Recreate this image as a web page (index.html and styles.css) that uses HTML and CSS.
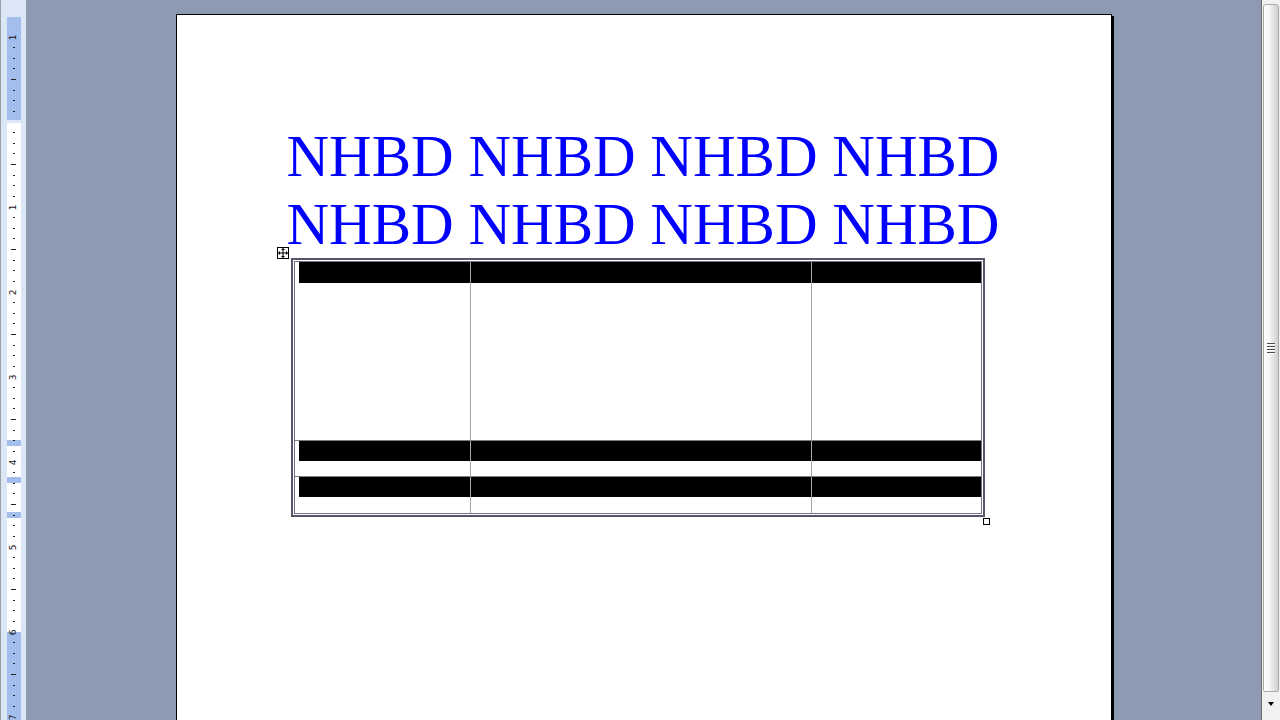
FILE: index.html
```html
<!DOCTYPE html>
<html>
<head>
<meta charset="utf-8">
<title>Document</title>
<link rel="stylesheet" href="styles.css">
</head>
<body>
<div class="app">
  <div class="ruler">
    <div class="strip">
      <div class="bands">
        <div class="band gap-top"></div>
        <div class="band blue top-margin"></div>
        <div class="band gap-mid"></div>
        <div class="band white w1"></div>
        <div class="band blue row-mark"></div>
        <div class="band white w2"></div>
        <div class="band blue row-mark"></div>
        <div class="band white w3"></div>
        <div class="band blue row-mark"></div>
        <div class="band white w4"></div>
        <div class="band blue bottom-margin"></div>
      </div>
      <div class="ticks">
        <span class="slot"><b class="num">1</b></span>
        <span class="slot"><i class="t"></i></span><span class="slot"><i class="t"></i></span><span class="slot"><i class="t"></i></span>
        <span class="slot"><i class="t long"></i></span>
        <span class="slot"><i class="t"></i></span><span class="slot"><i class="t"></i></span><span class="slot"><i class="t"></i></span>
        <span class="slot"></span>
        <span class="slot"><i class="t"></i></span><span class="slot"><i class="t"></i></span><span class="slot"><i class="t"></i></span>
        <span class="slot"><i class="t long"></i></span>
        <span class="slot"><i class="t"></i></span><span class="slot"><i class="t"></i></span><span class="slot"><i class="t"></i></span>
        <span class="slot"><b class="num">1</b></span>
        <span class="slot"><i class="t"></i></span><span class="slot"><i class="t"></i></span><span class="slot"><i class="t"></i></span>
        <span class="slot"><i class="t long"></i></span>
        <span class="slot"><i class="t"></i></span><span class="slot"><i class="t"></i></span><span class="slot"><i class="t"></i></span>
        <span class="slot"><b class="num">2</b></span>
        <span class="slot"><i class="t"></i></span><span class="slot"><i class="t"></i></span><span class="slot"><i class="t"></i></span>
        <span class="slot"><i class="t long"></i></span>
        <span class="slot"><i class="t"></i></span><span class="slot"><i class="t"></i></span><span class="slot"><i class="t"></i></span>
        <span class="slot"><b class="num">3</b></span>
        <span class="slot"><i class="t"></i></span><span class="slot"><i class="t"></i></span><span class="slot"><i class="t"></i></span>
        <span class="slot"><i class="t long"></i></span>
        <span class="slot"><i class="t"></i></span><span class="slot"><i class="t"></i></span><span class="slot"><i class="t"></i></span>
        <span class="slot"><b class="num">4</b></span>
        <span class="slot"><i class="t"></i></span><span class="slot"><i class="t"></i></span><span class="slot"><i class="t"></i></span>
        <span class="slot"><i class="t long"></i></span>
        <span class="slot"><i class="t"></i></span><span class="slot"><i class="t"></i></span><span class="slot"><i class="t"></i></span>
        <span class="slot"><b class="num">5</b></span>
        <span class="slot"><i class="t"></i></span><span class="slot"><i class="t"></i></span><span class="slot"><i class="t"></i></span>
        <span class="slot"><i class="t long"></i></span>
        <span class="slot"><i class="t"></i></span><span class="slot"><i class="t"></i></span><span class="slot"><i class="t"></i></span>
        <span class="slot"><b class="num">6</b></span>
        <span class="slot"><i class="t"></i></span><span class="slot"><i class="t"></i></span><span class="slot"><i class="t"></i></span>
        <span class="slot"><i class="t long"></i></span>
        <span class="slot"><i class="t"></i></span><span class="slot"><i class="t"></i></span><span class="slot"><i class="t"></i></span>
        <span class="slot"><b class="num">7</b></span>
      </div>
    </div>
  </div>

  <div class="workspace">
    <div class="page">
      <div class="title">NHBD NHBD NHBD NHBD<br>NHBD NHBD NHBD NHBD</div>
      <div class="table">
        <div class="move-handle">
          <svg width="10" height="10" viewBox="0 0 10 10">
            <path d="M5 0.5 L5 9.5 M0.5 5 L9.5 5" stroke="#000" stroke-width="1" fill="none"/>
            <path d="M5 0 L3 2 L7 2 Z M5 10 L3 8 L7 8 Z M0 5 L2 3 L2 7 Z M10 5 L8 3 L8 7 Z" fill="#000"/>
          </svg>
        </div>
        <div class="inner">
          <div class="row row-a">
            <div class="cell c1"><div class="bar full"></div></div>
            <div class="cell c2"><div class="bar full"></div></div>
            <div class="cell c3"><div class="bar full"></div></div>
          </div>
          <div class="row row-b">
            <div class="cell c1"></div>
            <div class="cell c2"></div>
            <div class="cell c3"></div>
          </div>
          <div class="row row-c">
            <div class="cell c1"><div class="bar"></div></div>
            <div class="cell c2"><div class="bar"></div></div>
            <div class="cell c3"><div class="bar"></div></div>
          </div>
          <div class="row row-d">
            <div class="cell c1"><div class="bar"></div></div>
            <div class="cell c2"><div class="bar"></div></div>
            <div class="cell c3"><div class="bar"></div></div>
          </div>
        </div>
        <div class="resize-handle"></div>
      </div>
    </div>
  </div>

  <div class="scrollbar">
    <div class="thumb">
      <div class="grip"><i></i><i></i><i></i><i></i></div>
    </div>
    <div class="down-btn"><span class="arrow"></span></div>
  </div>
</div>
</body>
</html>
```
FILE: styles.css
```css
html, body {
  margin: 0;
  padding: 0;
  width: 1280px;
  height: 720px;
  overflow: hidden;
  background: #8e9ab2;
  font-family: "Liberation Sans", Arial, sans-serif;
}

.app {
  display: flex;
  width: 1280px;
  height: 720px;
}

/* ---------- vertical ruler ---------- */
.ruler {
  flex: none;
  width: 26px;
  height: 720px;
  box-sizing: border-box;
  border-left: 1px solid #9c9ea6;
  padding-left: 6px;
  background: #dbe6f7;
}

.strip {
  width: 14px;
  height: 720px;
  display: grid;
}

.bands, .ticks {
  grid-area: 1 / 1;
  display: flex;
  flex-direction: column;
}

.band { flex: none; }
.blue { background: #a3bdec; }
.white { background: #ffffff; }
.gap-top { height: 17px; }
.top-margin { height: 103px; }
.gap-mid { height: 3px; }
.w1 { height: 317px; }
.row-mark { height: 6px; }
.w2 { height: 31px; }
.w3 { height: 29px; }
.w4 { height: 114px; }
.bottom-margin { height: 100px; }

.ticks {
  padding-top: 31.69px;
}

.slot {
  flex: none;
  height: 10.625px;
  display: flex;
  align-items: center;
  justify-content: center;
}

.t {
  display: block;
  width: 2px;
  height: 1px;
  background: #222;
  margin-left: -1px;
}
.t.long {
  width: 5px;
  margin-left: -2px;
}

.num {
  display: block;
  font-family: "DejaVu Sans", sans-serif;
  font-weight: normal;
  font-size: 9px;
  line-height: 9px;
  color: #111;
  transform: rotate(-90deg);
  margin-left: -1px;
}

/* ---------- workspace + page ---------- */
.workspace {
  flex: 1;
  height: 720px;
  box-sizing: border-box;
  padding-left: 150px;
  padding-top: 14px;
  overflow: hidden;
  background: #8e9ab2;
}

.page {
  width: 936px;
  height: 900px;
  box-sizing: border-box;
  border: 1px solid #000;
  box-shadow: 2px 2px 0 #000;
  background: #fff;
  padding-top: 107px;
}

.title {
  font-family: "Liberation Serif", "Times New Roman", serif;
  font-size: 59px;
  line-height: 68px;
  color: #0000ff;
  text-align: center;
  white-space: nowrap;
  padding-right: 2px;
}

/* ---------- table ---------- */
.table {
  position: relative;
  margin-left: 114px;
  width: 694px;
  box-sizing: border-box;
  border: 2px solid #56566a;
  padding: 1px;
  background: #fff;
}

.inner {
  border: 1px solid #73738a;
  display: flex;
  flex-direction: column;
}

.row {
  display: flex;
  flex: none;
}

.row-a { height: 21px; }
.row-b { height: 157px; }
.row-c { height: 35px; border-top: 1px solid #7d7d7d; }
.row-d { height: 36px; border-top: 1px solid #7d7d7d; }

.cell {
  flex: none;
  display: flex;
  flex-direction: column;
}
.c1 { width: 175px; padding-left: 4px; box-sizing: border-box; }
.c2 { width: 340px; border-left: 1px solid #a6a6a6; }
.c3 { width: 169px; border-left: 1px solid #a6a6a6; }

.bar {
  height: 20px;
  background: #000;
}
.bar.full { height: 21px; }

.move-handle {
  position: absolute;
  left: -16px;
  top: -13px;
  width: 12px;
  height: 12px;
  box-sizing: border-box;
  border: 1px solid #000;
  background: #fff;
  display: flex;
  align-items: center;
  justify-content: center;
}
.move-handle svg { display: block; }

.resize-handle {
  position: absolute;
  left: 690px;
  top: 258px;
  width: 7px;
  height: 7px;
  box-sizing: border-box;
  border: 1px solid #000;
  background: #fff;
}

/* ---------- scrollbar ---------- */
.scrollbar {
  flex: none;
  width: 19px;
  height: 720px;
  box-sizing: border-box;
  border-left: 1px solid #6d6d6d;
  background: #f1f1ef;
  padding-top: 4px;
  display: flex;
  flex-direction: column;
}

.thumb {
  flex: none;
  height: 688px;
  margin: 0 1px 0 1px;
  box-sizing: border-box;
  border: 1px solid #a9a9a9;
  border-radius: 3px 3px 2px 2px;
  background: linear-gradient(to right, #ffffff 0%, #f4f4f4 40%, #dcdcdc 80%, #cfcfcf 100%);
  display: flex;
  align-items: center;
  justify-content: center;
}

.grip {
  display: flex;
  flex-direction: column;
  gap: 1px;
  margin-left: -1px;
}
.grip i {
  display: block;
  width: 8px;
  height: 1px;
  background: #4a4a4a;
  border-bottom: 1px solid #ffffff;
}

.down-btn {
  flex: 1;
  display: flex;
  align-items: center;
  justify-content: center;
  padding-bottom: 4px;
}
.arrow {
  display: block;
  width: 0;
  height: 0;
  border-left: 3.5px solid transparent;
  border-right: 3.5px solid transparent;
  border-top: 4px solid #000;
  margin-left: -1px;
}
```
